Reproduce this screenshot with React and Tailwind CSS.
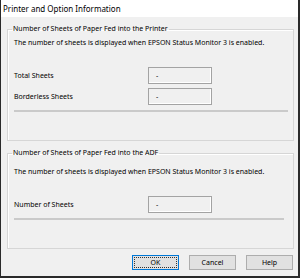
import React from 'react'

const FONT = { fontFamily: '"Segoe UI", "Noto Sans", sans-serif' }

const ValueBox = ({ value }) => (
  <div className="w-[64px] h-[17px] border border-[#a3a3a3] shadow-[inset_-1px_-1px_0_#ffffff] bg-[#f0f0f0] flex items-center pl-[7px] text-[7px] leading-none">
    {value}
  </div>
)

const Row = ({ label, className = '' }) => (
  <div className={`flex items-center ${className}`}>
    <span className="w-[134px] text-[7px] leading-none">{label}</span>
    <ValueBox value="-" />
  </div>
)

const GroupBox = ({ title, className = '', children }) => (
  <fieldset className={`ml-[6px] w-[287px] border border-[#d6d6d6] shadow-[inset_1px_1px_0_#ffffff] ${className}`}>
    <legend className="ml-[4px] px-[1px] text-[7px] leading-[10px]">{title}</legend>
    {children}
  </fieldset>
)

const Button = ({ label, focused }) => (
  <button
    className={`w-[47px] h-[15px] text-[7px] leading-none flex items-center justify-center bg-[#e1e1e1] border ${
      focused ? 'border-[#0078d7]' : 'border-[#adadad]'
    }`}
  >
    {focused ? (
      <span className="w-[43px] h-[11px] border border-dotted border-[#333] flex items-center justify-center">{label}</span>
    ) : (
      label
    )}
  </button>
)

export default function App() {
  return (
    <div style={FONT} className="w-[300px] h-[278px] bg-[#f0f0f0] border-l border-r-2 border-b-2 border-[#2a2a2a] text-black flex flex-col overflow-hidden">
      <div className="h-[17px] bg-white flex items-center pl-[2px] text-[8px]">Printer and Option Information</div>

      <GroupBox title="Number of Sheets of Paper Fed into the Printer" className="mt-[7px] h-[117px]">
        <div className="pl-[6px] pr-[4px] pt-[4px]">
          <p className="text-[7px] leading-[10px]">
            The number of sheets is displayed when EPSON Status Monitor 3 is enabled.
          </p>
          <Row label="Total Sheets" className="mt-[19px]" />
          <Row label="Borderless Sheets" className="mt-[4px]" />
          <div className="mt-[5px] w-[274px] h-[2px] bg-[#cacaca]" />
        </div>
      </GroupBox>

      <GroupBox title="Number of Sheets of Paper Fed into the ADF" className="mt-[7px] h-[101px]">
        <div className="pl-[6px] pt-[9px]">
          <p className="text-[7px] leading-[10px]">
            The number of sheets is displayed when EPSON Status Monitor 3 is enabled.
          </p>
          <Row label="Number of Sheets" className="mt-[19px]" />
          <div className="mt-[5px] w-[270px] h-[2px] bg-[#cacaca]" />
        </div>
      </GroupBox>

      <div className="mt-[6px] flex justify-end gap-[10px] pr-[5px]">
        <Button label="OK" focused />
        <Button label="Cancel" />
        <Button label="Help" />
      </div>
    </div>
  )
}
